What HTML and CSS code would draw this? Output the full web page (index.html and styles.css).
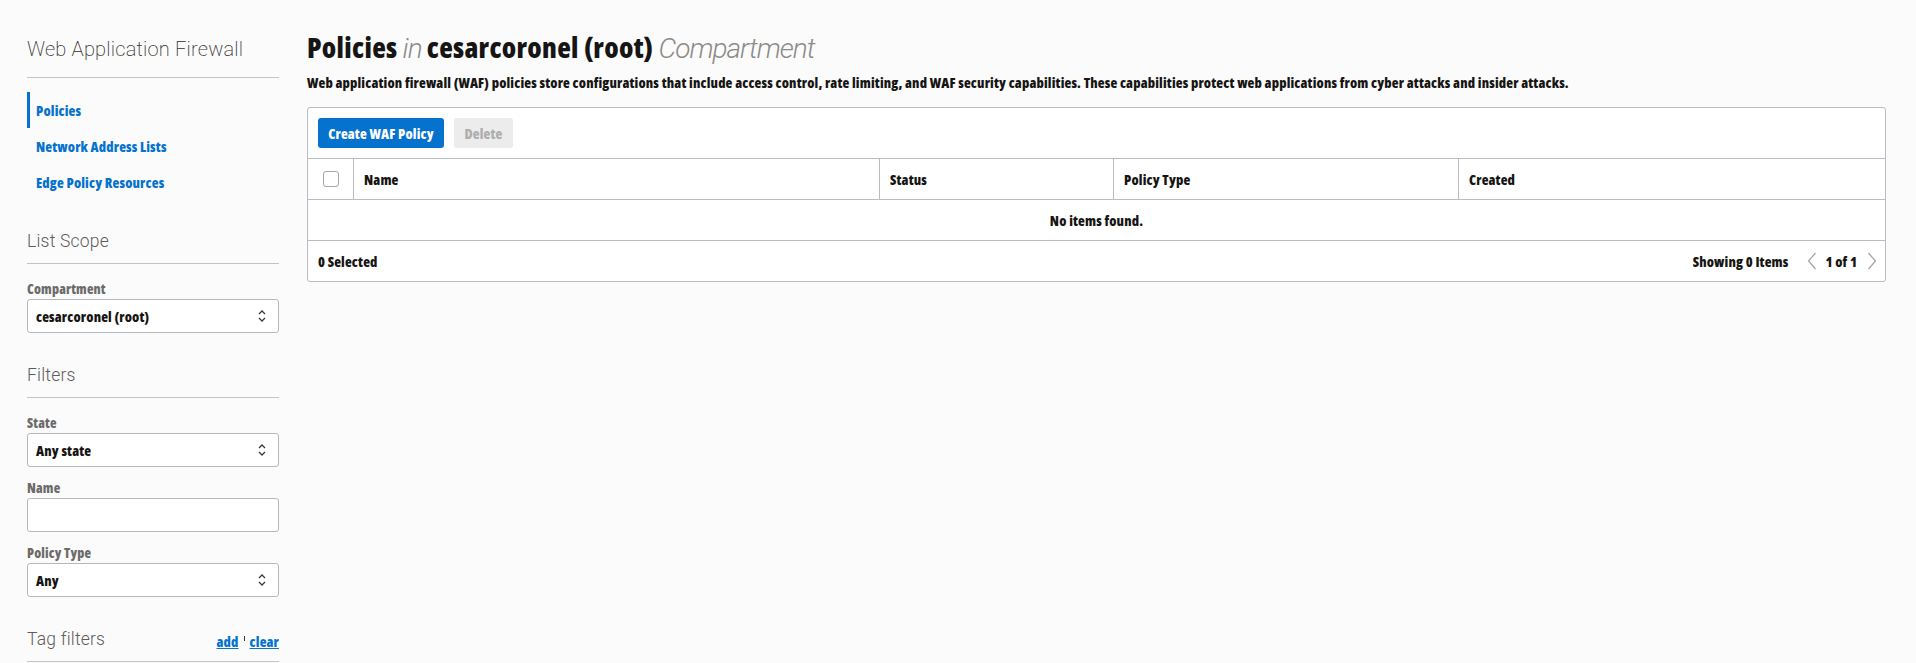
FILE: index.html
```html
<!DOCTYPE html>
<html lang="en">
<head>
<meta charset="utf-8">
<title>Policies - Web Application Firewall</title>
<link rel="stylesheet" href="styles.css">
</head>
<body>
<div class="page">
  <aside class="sidebar">
    <h2 class="side-title">Web Application Firewall</h2>
    <nav class="side-nav">
      <a class="nav-item active" href="#">Policies</a>
      <a class="nav-item" href="#">Network Address Lists</a>
      <a class="nav-item" href="#">Edge Policy Resources</a>
    </nav>

    <h3 class="side-heading">List Scope</h3>
    <div class="field first">
      <label class="field-label">Compartment</label>
      <div class="select"><span>cesarcoronel (root)</span>
        <svg class="updown" width="8" height="14" viewBox="0 0 8 14"><polyline points="1,5 4,2 7,5" /><polyline points="1,9 4,12 7,9" /></svg>
      </div>
    </div>

    <h3 class="side-heading gap">Filters</h3>
    <div class="field first">
      <label class="field-label">State</label>
      <div class="select"><span>Any state</span>
        <svg class="updown" width="8" height="14" viewBox="0 0 8 14"><polyline points="1,5 4,2 7,5" /><polyline points="1,9 4,12 7,9" /></svg>
      </div>
    </div>
    <div class="field">
      <label class="field-label">Name</label>
      <div class="input"></div>
    </div>
    <div class="field">
      <label class="field-label">Policy Type</label>
      <div class="select"><span>Any</span>
        <svg class="updown" width="8" height="14" viewBox="0 0 8 14"><polyline points="1,5 4,2 7,5" /><polyline points="1,9 4,12 7,9" /></svg>
      </div>
    </div>

    <div class="side-heading gap tag-row">
      <span>Tag filters</span>
      <span class="tag-links"><a href="#">add</a><span class="sep"></span><a href="#">clear</a></span>
    </div>
  </aside>

  <main class="main">
    <h1 class="title"><span class="strong">Policies</span> <span class="light">in</span> <span class="strong">cesarcoronel (root)</span> <span class="light">Compartment</span></h1>
    <p class="desc">Web application firewall (WAF) policies store configurations that include access control, rate limiting, and WAF security capabilities. These capabilities protect web applications from cyber attacks and insider attacks.</p>

    <section class="panel">
      <div class="toolbar">
        <button class="btn primary">Create WAF Policy</button>
        <button class="btn disabled">Delete</button>
      </div>
      <div class="table">
        <div class="cell head check"><span class="checkbox"></span></div>
        <div class="cell head">Name</div>
        <div class="cell head">Status</div>
        <div class="cell head">Policy Type</div>
        <div class="cell head last">Created</div>
        <div class="empty">No items found.</div>
      </div>
      <div class="footer">
        <span>0 Selected</span>
        <div class="pager">
          <span>Showing 0 Items</span>
          <svg class="chev" width="10" height="18" viewBox="0 0 10 18"><polyline points="8.5,1 1.5,9 8.5,17" /></svg>
          <span class="pages">1 of 1</span>
          <svg class="chev" width="10" height="18" viewBox="0 0 10 18"><polyline points="1.5,1 8.5,9 1.5,17" /></svg>
        </div>
      </div>
    </section>
  </main>
</div>
</body>
</html>
```

FILE: styles.css
```css
* { box-sizing: border-box; }

body {
  margin: 0;
  background: #fbfbfb;
  color: #161513;
  font-family: "Open Sans", "DejaVu Sans Condensed", sans-serif;
  font-stretch: 75%;
  font-weight: 800;
  letter-spacing: 0.15px;
}

.page {
  display: flex;
  gap: 28px;
  padding: 0 30px 0 27px;
}

/* ---------- Sidebar ---------- */
.sidebar {
  width: 252px;
  flex: none;
  padding-top: 37px;
}

.side-title {
  margin: 0;
  font-family: Roboto, "Liberation Sans", sans-serif;
  font-stretch: normal;
  font-weight: 200;
  font-size: 20px;
  line-height: 24px;
  letter-spacing: 0.2px;
  color: #33312f;
  padding-bottom: 16px;
  border-bottom: 1px solid #c0c3c9;
}

.side-nav {
  display: flex;
  flex-direction: column;
  margin-top: 14px;
}

.nav-item {
  display: flex;
  align-items: center;
  height: 36px;
  padding-left: 6px;
  color: #0572ce;
  text-decoration: none;
  font-size: 14px;
  border-left: 3px solid transparent;
}

.nav-item.active { border-left-color: #0572ce; }

.side-heading {
  margin: 31px 0 0;
  font-family: Roboto, "Liberation Sans", sans-serif;
  font-stretch: normal;
  font-weight: 300;
  font-size: 17.5px;
  line-height: 20px;
  letter-spacing: 0.2px;
  color: #5e5c5a;
  padding-bottom: 12px;
  border-bottom: 1px solid #c0c3c9;
}

.side-heading.gap { margin-top: 32px; }

.field { margin-top: 13px; }
.field.first { margin-top: 17px; }

.field-label {
  display: block;
  font-size: 13.5px;
  line-height: 16px;
  color: #6c6b6a;
  margin-bottom: 2px;
}

.select, .input {
  height: 34px;
  border: 1px solid #b5b8bf;
  border-radius: 3px;
  background: #fff;
}

.select {
  display: flex;
  align-items: center;
  justify-content: space-between;
  padding: 0 12px 0 8px;
  font-size: 14px;
  color: #161513;
}

.updown polyline {
  fill: none;
  stroke: #3a3836;
  stroke-width: 1.3;
}

.tag-row {
  display: flex;
  justify-content: space-between;
  align-items: flex-end;
}

.tag-links {
  display: flex;
  align-items: center;
  font-family: "Open Sans", "DejaVu Sans Condensed", sans-serif;
  font-stretch: 75%;
  font-weight: 800;
  font-size: 14px;
  letter-spacing: 0.15px;
  margin-bottom: -3px;
}

.tag-links a { color: #0572ce; text-decoration: underline; }

.sep {
  display: inline-block;
  width: 1px;
  height: 5px;
  background: #3a3836;
  margin: 0 5px 7px;
}

/* ---------- Main ---------- */
.main {
  flex: 1;
  min-width: 0;
  padding-top: 30px;
}

.title {
  margin: 0;
  font-size: 28px;
  line-height: 34px;
  font-weight: 800;
  letter-spacing: 0.3px;
  color: #161513;
}

.title .light {
  font-family: Roboto, "Liberation Sans", sans-serif;
  font-stretch: normal;
  font-weight: 300;
  font-style: italic;
  color: #8d8b89;
  letter-spacing: -1px;
}

.desc {
  margin: 8px 0 0;
  font-size: 14px;
  line-height: 18px;
}

.panel {
  margin-top: 15px;
  background: #fff;
  border: 1px solid #b9bcc3;
  border-radius: 3px;
}

.toolbar {
  display: flex;
  gap: 10px;
  padding: 10px 10px;
  border-bottom: 1px solid #b9bcc3;
}

.btn {
  height: 30px;
  border: 0;
  border-radius: 3px;
  font-family: inherit;
  font-stretch: inherit;
  letter-spacing: inherit;
  font-weight: 800;
  font-size: 14px;
  padding: 0;
  white-space: nowrap;
}

.btn.primary { background: #0572ce; color: #fff; width: 126px; }
.btn.disabled { background: #ececec; color: #aeaeae; width: 59px; }

.table {
  display: grid;
  grid-template-columns: 46px 526px 234px 345px 1fr;
}

.cell.head {
  height: 41px;
  display: flex;
  align-items: center;
  padding-left: 10px;
  font-size: 14px;
  border-bottom: 1px solid #b9bcc3;
  border-right: 1px solid #b9bcc3;
}

.cell.head.last { border-right: 0; }

.cell.head.check {
  justify-content: center;
  padding-left: 0;
}

.checkbox {
  width: 16px;
  height: 16px;
  border: 1px solid #a3a7ae;
  border-radius: 3px;
  background: #fff;
}

.empty {
  grid-column: 1 / -1;
  height: 41px;
  display: flex;
  align-items: center;
  justify-content: center;
  font-size: 14px;
  border-bottom: 1px solid #b9bcc3;
}

.footer {
  height: 40px;
  display: flex;
  align-items: center;
  justify-content: space-between;
  padding: 0 8px 0 10px;
  font-size: 14px;
}

.pager {
  display: flex;
  align-items: center;
}

.pager .chev { margin-left: 18px; }
.pager .pages { margin-left: 9px; }
.pager .pages + .chev { margin-left: 10px; }

.chev polyline {
  fill: none;
  stroke: #a3a3a3;
  stroke-width: 1.2;
}
```
